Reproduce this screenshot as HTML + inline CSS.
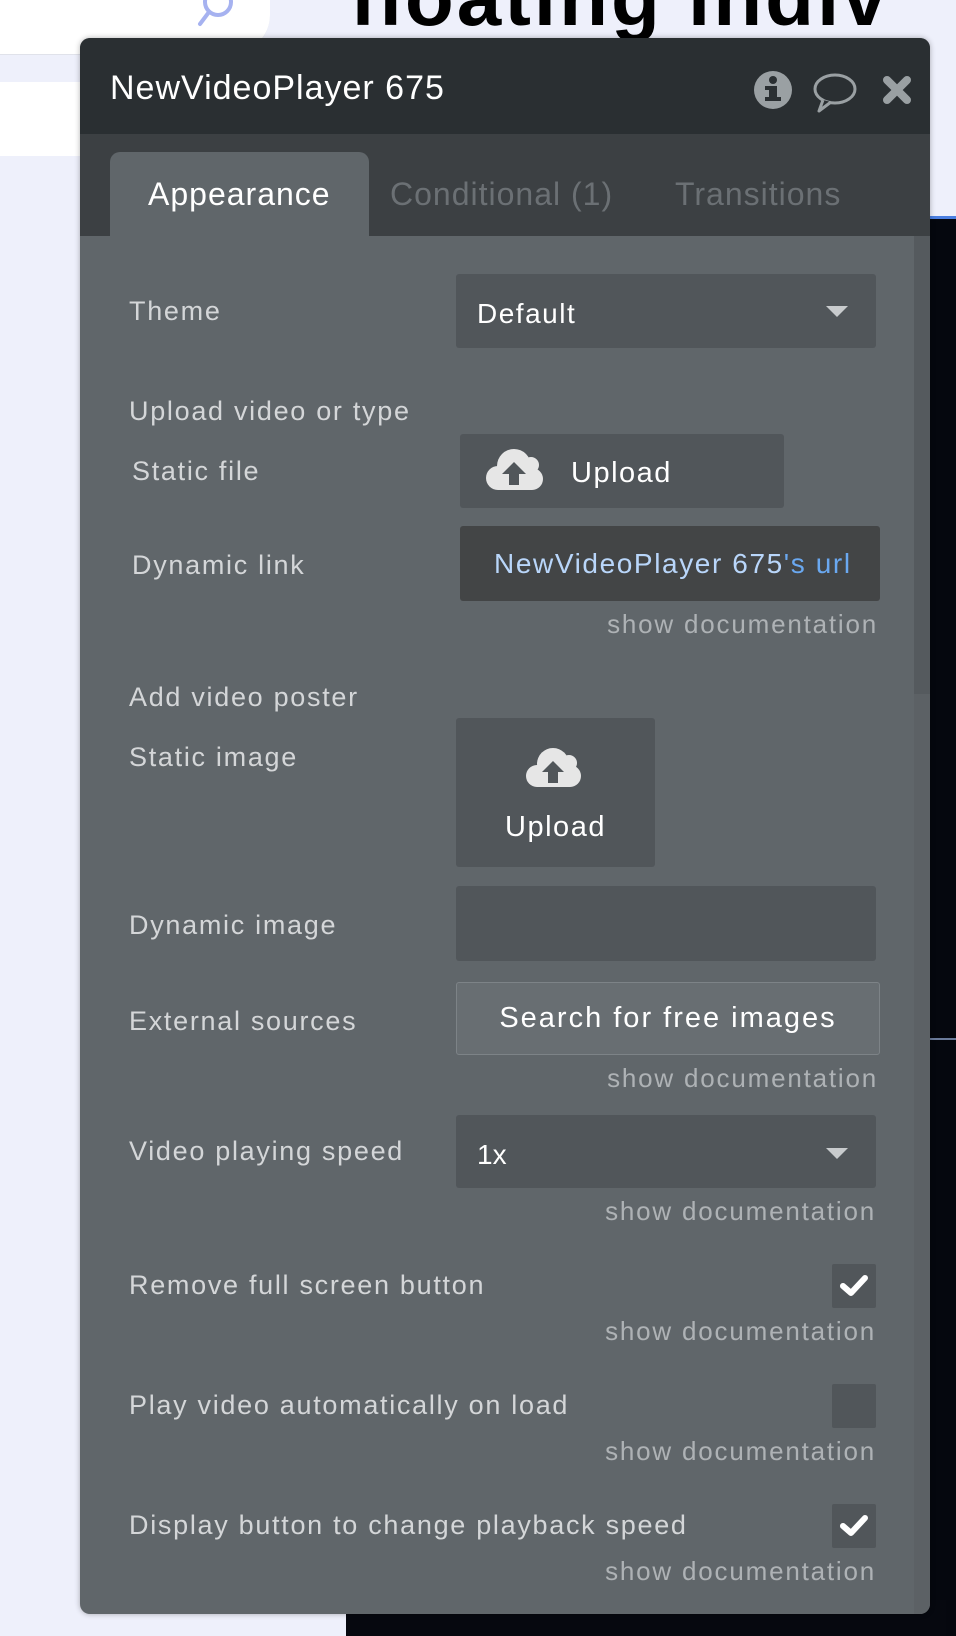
<!DOCTYPE html>
<html><head><meta charset="utf-8"><style>
*{box-sizing:border-box;margin:0;padding:0}
body{width:956px;height:1636px;overflow:hidden;background:#eef0fb;position:relative;font-family:"Liberation Sans",sans-serif}
.a{position:absolute}
.lbl{position:absolute;left:129px;color:#d4d6d8;font-size:27px;line-height:30px;white-space:nowrap;letter-spacing:1.7px}
.doc{position:absolute;color:#aeb2b5;font-size:26px;line-height:30px;text-align:right;white-space:nowrap;letter-spacing:1.8px}
.box{position:absolute;background:#51565a;border-radius:3px}
.chk{position:absolute;width:44px;height:44px;background:#51565a;border-radius:2px}
</style></head><body>
<div class="a" style="left:0;top:0;width:270px;height:55px;background:#fff;border-radius:0 0 40px 0;border-bottom:1px solid #e0e2ea"></div>
<div class="a" style="left:0;top:82px;width:90px;height:74px;background:#fff"></div>
<svg class="a" style="left:190px;top:0" width="50" height="30"><circle cx="28" cy="2" r="13" fill="none" stroke="#a6b2f0" stroke-width="4"/><line x1="19" y1="12" x2="10" y2="24" stroke="#a6b2f0" stroke-width="4" stroke-linecap="round"/></svg>
<div class="a" style="left:350px;top:-42px;font-size:80px;font-weight:bold;color:#000;white-space:nowrap;line-height:80px;letter-spacing:3px">floating indiv</div>
<div class="a" style="left:930px;top:216px;width:26px;height:3px;background:#4a7ee0"></div>
<div class="a" style="left:930px;top:219px;width:26px;height:1417px;background:#05070e"></div>
<div class="a" style="left:930px;top:1038px;width:26px;height:2px;background:#6a7a9a"></div>
<div class="a" style="left:346px;top:1600px;width:600px;height:36px;background:#06080f"></div>

<div class="a" style="left:80px;top:38px;width:850px;height:1576px;background:#60666a;border-radius:10px;overflow:hidden;box-shadow:0 0 6px rgba(0,0,0,.3)">
 <div class="a" style="left:0;top:0;width:850px;height:96px;background:#2a2f32"></div>
 <div class="a" style="left:30px;top:30px;color:#fff;font-size:34px;line-height:40px;letter-spacing:1px">NewVideoPlayer 675</div>
 <svg class="a" style="left:673px;top:32px" width="170" height="44">
  <circle cx="20" cy="20" r="19" fill="#9aa0a3"/>
  <rect x="16" y="16" width="8" height="14" fill="#2a2f32"/><rect x="12" y="16" width="10" height="4" fill="#2a2f32"/><rect x="12" y="27" width="16" height="4" fill="#2a2f32"/><circle cx="20" cy="10" r="4" fill="#2a2f32"/>
  <ellipse cx="82" cy="19" rx="20" ry="14" fill="none" stroke="#9aa0a3" stroke-width="3"/>
  <path d="M70 30 L66 41 L78 32" fill="#2a2f32" stroke="#9aa0a3" stroke-width="3" stroke-linejoin="round"/>
  <path d="M134 10 L154 30 M154 10 L134 30" stroke="#9aa0a3" stroke-width="8" stroke-linecap="round"/>
 </svg>
 <div class="a" style="left:0;top:96px;width:850px;height:102px;background:#3c4043"></div>
 <div class="a" style="left:30px;top:114px;width:259px;height:84px;background:#60666a;border-radius:10px 10px 0 0"></div>
 <div class="a" style="left:68px;top:137px;color:#fff;font-size:32px;line-height:38px;letter-spacing:1px">Appearance</div>
 <div class="a" style="left:310px;top:137px;color:#6b7074;font-size:32px;line-height:38px;letter-spacing:1px">Conditional (1)</div>
 <div class="a" style="left:595px;top:137px;color:#6b7074;font-size:32px;line-height:38px;letter-spacing:1px">Transitions</div>
 <div class="a" style="left:834px;top:198px;width:16px;height:458px;background:#555a5e"></div>
 <div class="a" style="left:834px;top:656px;width:16px;height:920px;background:#5c6165"></div>
</div>

<div class="lbl" style="top:296px">Theme</div>
<div class="box" style="left:456px;top:274px;width:420px;height:74px"></div>
<div class="a" style="left:477px;top:298px;color:#fff;font-size:28px;line-height:32px;letter-spacing:1.5px">Default</div>
<svg class="a" style="left:826px;top:306px" width="22" height="12"><path d="M0 0 L22 0 L11 11Z" fill="#c8cbcd"/></svg>

<div class="lbl" style="top:396px">Upload video or type</div>
<div class="lbl" style="left:132px;top:456px">Static file</div>
<div class="box" style="left:460px;top:434px;width:324px;height:74px"></div>
<svg class="a" style="left:484px;top:446px" width="62" height="48"><g fill="#e6e6e6"><circle cx="14" cy="32" r="12"/><circle cx="30" cy="20" r="17"/><circle cx="47" cy="19" r="8"/><circle cx="48" cy="33" r="11"/><rect x="14" y="28" width="34" height="16"/></g><path d="M30 16 L18 28 L25 28 L25 39 L35 39 L35 28 L42 28Z" fill="#51565a"/></svg>
<div class="a" style="left:571px;top:456px;color:#fff;font-size:29px;line-height:34px;letter-spacing:1.5px">Upload</div>

<div class="lbl" style="left:132px;top:550px">Dynamic link</div>
<div class="a" style="left:460px;top:526px;width:420px;height:75px;background:#434546;border-radius:3px"></div>
<div class="a" style="left:494px;top:548px;color:#b9d6fa;font-size:28px;line-height:32px;white-space:nowrap;letter-spacing:1.6px">NewVideoPlayer 675<span style="color:#6aa8f0">'s url</span></div>
<div class="doc" style="right:78px;top:609px">show documentation</div>

<div class="lbl" style="top:682px">Add video poster</div>
<div class="lbl" style="top:742px">Static image</div>
<div class="box" style="left:456px;top:718px;width:199px;height:149px"></div>
<svg class="a" style="left:524px;top:745px" width="60" height="46"><g fill="#e6e6e6"><circle cx="13" cy="31" r="11"/><circle cx="29" cy="19" r="16"/><circle cx="45" cy="18" r="8"/><circle cx="46" cy="31" r="11"/><rect x="13" y="27" width="33" height="15"/></g><path d="M29 16 L18 27 L24 27 L24 38 L34 38 L34 27 L40 27Z" fill="#51565a"/></svg>
<div class="a" style="left:456px;top:810px;width:199px;text-align:center;color:#fff;font-size:29px;line-height:34px;letter-spacing:1.5px">Upload</div>

<div class="lbl" style="top:910px">Dynamic image</div>
<div class="box" style="left:456px;top:886px;width:420px;height:75px"></div>

<div class="lbl" style="top:1006px">External sources</div>
<div class="a" style="left:456px;top:982px;width:424px;height:73px;background:#686e72;border:1px solid #7d8387;border-radius:3px;color:#fff;font-size:29px;line-height:71px;text-align:center;letter-spacing:2px">Search for free images</div>
<div class="doc" style="right:78px;top:1063px">show documentation</div>

<div class="lbl" style="top:1136px">Video playing speed</div>
<div class="box" style="left:456px;top:1115px;width:420px;height:73px"></div>
<div class="a" style="left:477px;top:1139px;color:#fff;font-size:28px;line-height:32px">1x</div>
<svg class="a" style="left:826px;top:1148px" width="22" height="12"><path d="M0 0 L22 0 L11 11Z" fill="#c8cbcd"/></svg>
<div class="doc" style="right:80px;top:1196px">show documentation</div>

<div class="lbl" style="top:1270px">Remove full screen button</div>
<div class="chk" style="left:832px;top:1264px"></div>
<svg class="a" style="left:840px;top:1274px" width="28" height="24"><path d="M3 12 L11 19 L25 4" fill="none" stroke="#fff" stroke-width="6" stroke-linejoin="round" stroke-linecap="round"/></svg>
<div class="doc" style="right:80px;top:1316px">show documentation</div>

<div class="lbl" style="top:1390px">Play video automatically on load</div>
<div class="chk" style="left:832px;top:1384px"></div>
<div class="doc" style="right:80px;top:1436px">show documentation</div>

<div class="lbl" style="top:1510px">Display button to change playback speed</div>
<div class="chk" style="left:832px;top:1504px"></div>
<svg class="a" style="left:840px;top:1514px" width="28" height="24"><path d="M3 12 L11 19 L25 4" fill="none" stroke="#fff" stroke-width="6" stroke-linejoin="round" stroke-linecap="round"/></svg>
<div class="doc" style="right:80px;top:1556px">show documentation</div>
</body></html>
